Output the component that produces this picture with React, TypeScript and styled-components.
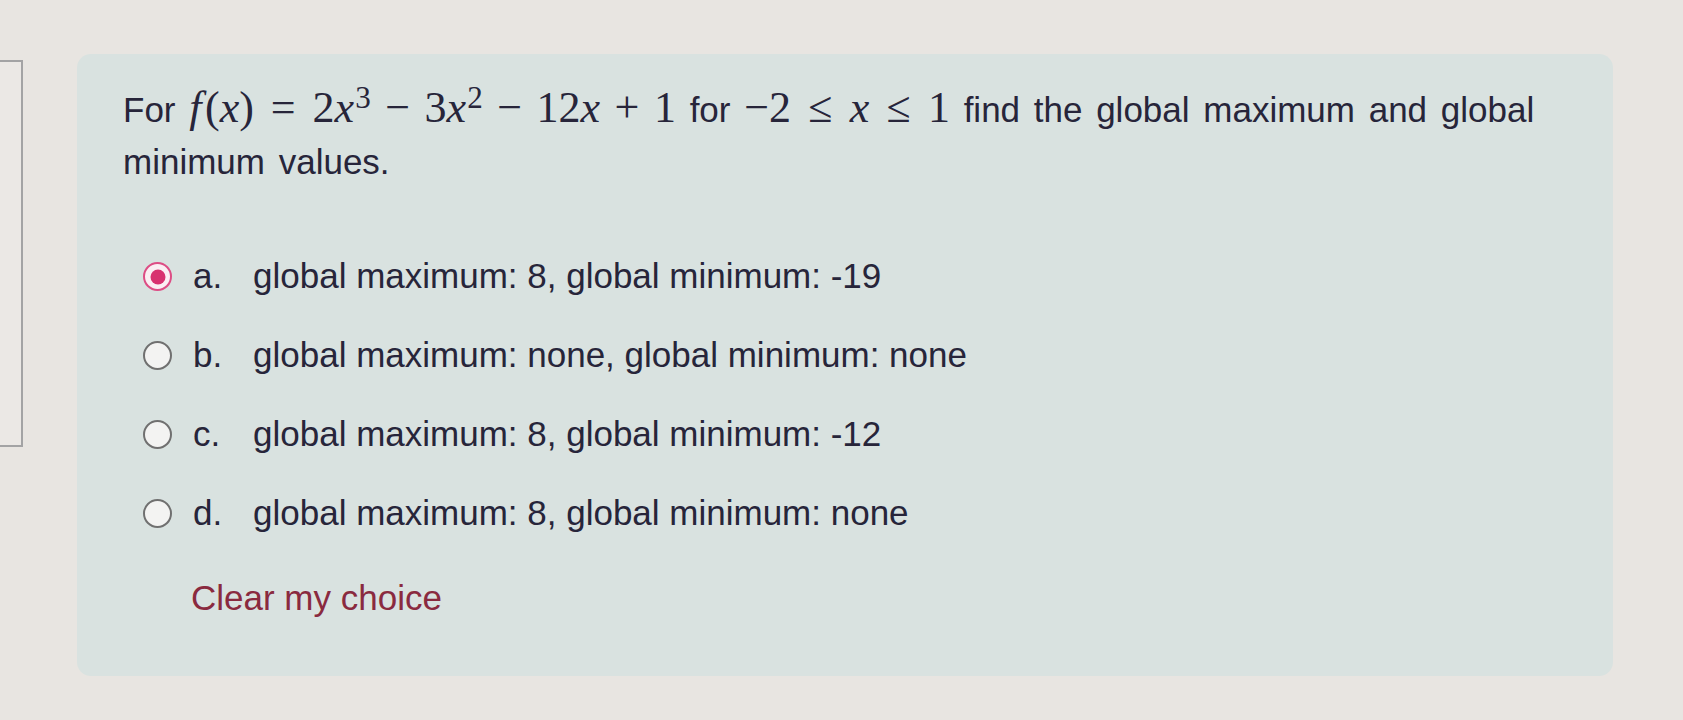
import React from 'react'
import styled, { createGlobalStyle } from 'styled-components'

const GlobalStyle = createGlobalStyle`
  html, body {
    margin: 0;
    padding: 0;
    background: #e8e5e1;
  }
  body {
    font-family: "Liberation Sans", Arial, sans-serif;
    color: #27253a;
  }
`

const Page = styled.div`
  display: flex;
  align-items: flex-start;
  width: 1683px;
  height: 720px;
  overflow: hidden;
`

const SideStub = styled.div`
  flex: 0 0 auto;
  width: 21px;
  height: 383px;
  margin-top: 60px;
  border: 2px solid #a3a3a4;
  border-left: none;
  background: #ebe8e5;
`

const Card = styled.div`
  flex: 0 0 auto;
  width: 1536px;
  margin: 54px 0 0 54px;
  padding: 30px 46px 53px;
  box-sizing: border-box;
  background: #d9e2e0;
  border-radius: 14px;
`

const QuestionText = styled.div`
  font-size: 35px;
  line-height: 52px;
  word-spacing: 4px;
  margin-bottom: 48px;
`

const MathInline = styled.span`
  font-family: "Liberation Serif", "DejaVu Serif", serif;
  font-size: 44px;
  line-height: 1;
  word-spacing: 0;
  white-space: nowrap;
`

const Var = styled.i<{ $kern?: number }>`
  font-style: italic;
  margin-right: ${(p) => p.$kern ?? 0}em;
`

const Op = styled.span<{ $rel?: boolean }>`
  display: inline-block;
  width: 0.778em;
  text-align: center;
  margin: 0 ${(p) => (p.$rel ? '0.278em' : '0.222em')};
`

const Sup = styled.sup`
  font-size: 0.707em;
  line-height: 0;
  vertical-align: 0.45em;
  margin-left: 0.04em;
`

const Answers = styled.div`
  display: flex;
  flex-direction: column;
`

const OptionRow = styled.label`
  display: flex;
  align-items: center;
  height: 79px;
  font-size: 35px;
  cursor: pointer;
`

const Radio = styled.span<{ $checked?: boolean }>`
  flex: 0 0 auto;
  position: relative;
  width: 29px;
  height: 29px;
  box-sizing: border-box;
  margin: 2px 21px 0 20px;
  border-radius: 50%;
  border: ${(p) => (p.$checked ? '2.5px solid #dd4d85' : '2.5px solid #707070')};
  background: ${(p) => (p.$checked ? '#fbeef3' : '#f3f3f2')};

  &::after {
    content: '';
    display: ${(p) => (p.$checked ? 'block' : 'none')};
    position: absolute;
    left: 50%;
    top: 50%;
    width: 15px;
    height: 15px;
    transform: translate(-50%, -50%);
    border-radius: 50%;
    background: #d8316f;
  }
`

const Letter = styled.span`
  flex: 0 0 auto;
  width: 60px;
`

const ClearLink = styled.a`
  display: block;
  margin: 21px 0 0 68px;
  font-size: 35px;
  line-height: 50px;
  color: #8a2a3f;
  text-decoration: none;
`

const options = [
  { letter: 'a.', text: 'global maximum: 8, global minimum: -19', checked: true },
  { letter: 'b.', text: 'global maximum: none, global minimum: none', checked: false },
  { letter: 'c.', text: 'global maximum: 8, global minimum: -12', checked: false },
  { letter: 'd.', text: 'global maximum: 8, global minimum: none', checked: false },
]

const App = () => {
  return (
    <>
      <GlobalStyle />
      <Page>
        <SideStub />
        <Card>
          <QuestionText>
            For{' '}
            <MathInline>
              <Var $kern={0.08}>f</Var>(<Var>x</Var>)<Op $rel>=</Op>2<Var>x</Var>
              <Sup>3</Sup>
              <Op>−</Op>3<Var>x</Var>
              <Sup>2</Sup>
              <Op>−</Op>12<Var>x</Var>
              <Op>+</Op>1
            </MathInline>{' '}
            for{' '}
            <MathInline>
              −2<Op $rel>≤</Op>
              <Var>x</Var>
              <Op $rel>≤</Op>1
            </MathInline>{' '}
            find the global maximum and global minimum values.
          </QuestionText>
          <Answers>
            {options.map((o) => (
              <OptionRow key={o.letter}>
                <Radio $checked={o.checked} />
                <Letter>{o.letter}</Letter>
                <span>{o.text}</span>
              </OptionRow>
            ))}
          </Answers>
          <ClearLink href="#">Clear my choice</ClearLink>
        </Card>
      </Page>
    </>
  )
}

export default App
